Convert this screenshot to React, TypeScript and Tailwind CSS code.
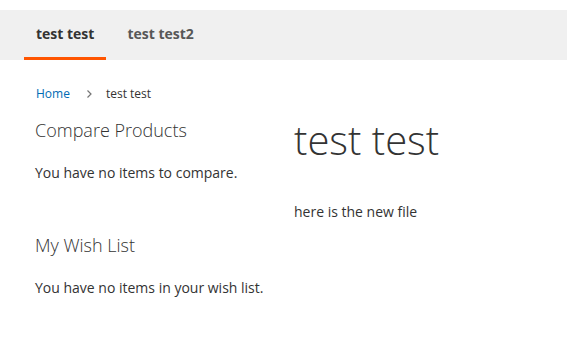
export default function App() {
  return (
    <div
      className="w-[567px] h-[356px] bg-white text-[#333] overflow-hidden"
      style={{ fontFamily: '"Open Sans", "Liberation Sans", sans-serif' }}
    >
      <div className="h-[10px]" />
      <nav className="h-[50px] bg-[#f0f0f0] pl-[24px] flex">
        <a className="px-[12px] h-[50px] leading-[47px] text-[14px] font-bold text-[#333] border-b-[3px] border-[#ff5501]">
          test test
        </a>
        <a className="ml-[9px] px-[12px] h-[50px] leading-[47px] text-[14px] font-bold text-[#575757]">
          test test2
        </a>
      </nav>
      <div className="pl-[36px] mt-[26px] flex items-center h-[16px] text-[12px] leading-[16px]">
        <span className="text-[#006bb4]">Home</span>
        <svg width="7" height="10" viewBox="0 0 7 10" className="ml-[16px] mr-[13px]">
          <polyline points="1.5,1.5 5,5 1.5,8.5" fill="none" stroke="#757575" strokeWidth="1.2" />
        </svg>
        <span className="text-[#333]">test test</span>
      </div>
      <div className="flex pl-[35px] mt-[17px]">
        <div className="w-[259px] shrink-0">
          <h2 className="text-[18px] leading-[22px] font-light">Compare Products</h2>
          <p className="mt-[22px] text-[14px] leading-[20px]">You have no items to compare.</p>
          <h2 className="mt-[51px] text-[18px] leading-[22px] font-light">My Wish List</h2>
          <p className="mt-[22px] text-[14px] leading-[20px]">You have no items in your wish list.</p>
        </div>
        <div className="-mt-[1px]">
          <h1 className="text-[40px] leading-[44px] font-light">test test</h1>
          <p className="mt-[40px] text-[14px] leading-[20px]">here is the new file</p>
        </div>
      </div>
    </div>
  );
}
